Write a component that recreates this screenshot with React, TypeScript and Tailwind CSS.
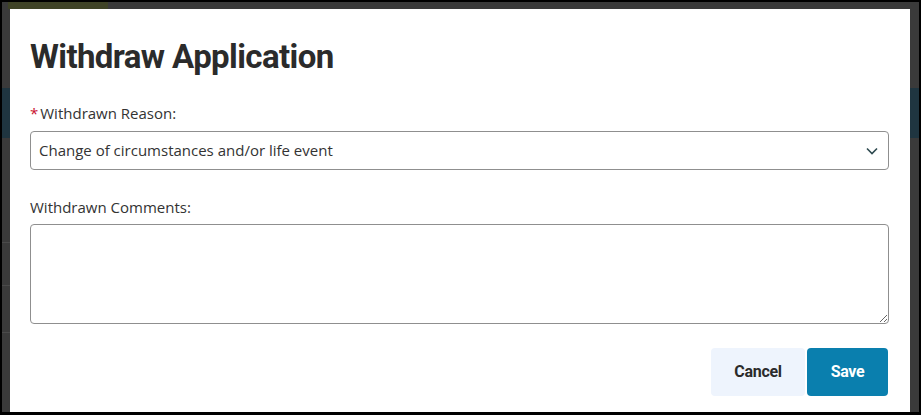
import React from "react";

const headFont = 'Roboto, "DejaVu Sans Condensed", sans-serif';

export default function App() {
  return (
    <div className="w-[921px] h-[415px] bg-black pt-[2px] pl-[2px] pr-[2px] pb-[3px] flex">
      <div className="relative flex-1 bg-[#3a3a3a] overflow-hidden pl-[8px] pt-[7px] flex">
        {/* faint page behind overlay */}
        <div className="absolute left-[6px] top-0 w-[100px] h-[7px] bg-[#3f4326]" />
        <div className="absolute left-0 top-[86px] w-[10px] h-[50px] bg-[#1f3540]" />
        <div className="absolute right-0 top-[86px] w-[10px] h-[50px] bg-[#1f3540]" />
        <div className="absolute left-0 top-[240px] w-[10px] h-px bg-[#4a4a4a]" />
        <div className="absolute left-0 top-[283px] w-[10px] h-px bg-[#4a4a4a]" />
        <div className="absolute left-0 top-[330px] w-[10px] h-px bg-[#4a4a4a]" />
        <div className="relative w-[900px] bg-white pl-[20px] pr-[21px] flex flex-col">
          <h1
            className="mt-[29px] text-[33px] leading-[38px] font-bold text-[#2b2b2b] tracking-[-0.6px]"
            style={{ fontFamily: headFont }}
          >
            Withdraw Application
          </h1>
          <div style={{ fontFamily: '"Open Sans", "Noto Sans", sans-serif' }} className="text-[15px] text-[#333333]">
            <label className="block mt-[27px] leading-[20px]">
              <span className="text-[#c8102e] mr-[2px]">*</span>Withdrawn Reason:
            </label>
            <div className="mt-[8px] h-[39px] border border-[#8f8f8f] rounded-[4px] flex items-center justify-between pl-[8px] pr-[10px]">
              <span>Change of circumstances and/or life event</span>
              <svg width="12" height="8" viewBox="0 0 12 8" fill="none">
                <path d="M1 1.5 L6 6.5 L11 1.5" stroke="#2e4a50" strokeWidth="1.6" />
              </svg>
            </div>
            <label className="block mt-[27px] leading-[20px]">Withdrawn Comments:</label>
            <textarea className="mt-[7px] block w-full h-[100px] border border-[#8f8f8f] rounded-[4px] resize-y outline-none" />
            <div className="mt-[24px] flex justify-end gap-[2px] pr-px">
              <button
                className="w-[94px] h-[48px] rounded-[4px] bg-[#eef4fd] text-[#2b2b2b] font-bold text-[16px] tracking-[-0.3px]"
                style={{ fontFamily: headFont }}
              >
                Cancel
              </button>
              <button
                className="w-[81px] h-[48px] rounded-[4px] bg-[#0a7fae] text-white font-bold text-[16px] tracking-[-0.3px]"
                style={{ fontFamily: headFont }}
              >
                Save
              </button>
            </div>
          </div>
        </div>
      </div>
    </div>
  );
}
